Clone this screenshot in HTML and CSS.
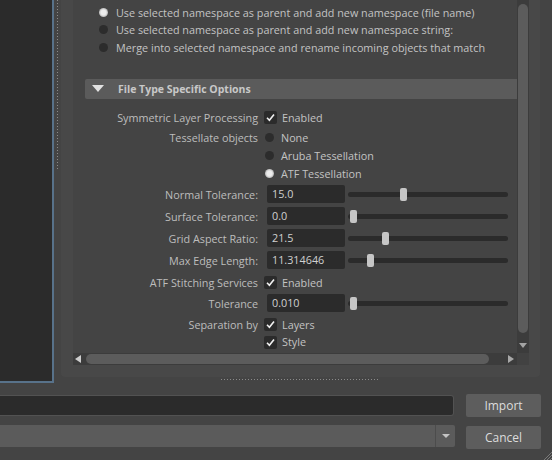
FILE: index.html
```html
<!DOCTYPE html>
<html>
<head>
<meta charset="utf-8">
<link rel="stylesheet" href="styles.css">
</head>
<body>
<div class="top">
  <div class="leftpane"></div>
  <div class="vsplit"><div class="vdots"></div></div>
  <div class="rightcol">
    <div class="frame">
      <div class="scrollarea">
        <div class="viewport">
          <div class="radios">
            <div class="rrow"><span class="radio on"></span><span class="rt">Use selected namespace as parent and add new namespace (file name)</span></div>
            <div class="rrow"><span class="radio"></span><span class="rt">Use selected namespace as parent and add new namespace string:</span></div>
            <div class="rrow"><span class="radio"></span><span class="rt">Merge into selected namespace and rename incoming objects that match</span></div>
          </div>
          <div class="section"><span class="tri"></span><span class="stitle">File Type Specific Options</span></div>
          <div class="form">
            <div class="row">
              <span class="lab">Symmetric Layer Processing</span>
              <span class="check"><svg viewBox="0 0 13 13" width="13" height="13"><polyline points="3,6.8 5.4,9.3 10,3.5" fill="none" stroke="#f0f0f0" stroke-width="1.6"/></svg></span>
              <span class="ctext">Enabled</span>
            </div>
            <div class="row sp2">
              <span class="lab">Tessellate objects</span>
              <span class="radio fr"></span><span class="rtext">None</span>
            </div>
            <div class="row">
              <span class="lab"></span>
              <span class="radio fr"></span><span class="rtext">Aruba Tessellation</span>
            </div>
            <div class="row">
              <span class="lab"></span>
              <span class="radio fr on"></span><span class="rtext">ATF Tessellation</span>
            </div>
            <div class="row frow sp2">
              <span class="lab">Normal Tolerance:</span>
              <span class="field">15.0</span>
              <span class="slider"><span class="thumb" style="left:52px"></span></span>
            </div>
            <div class="row frow sp2">
              <span class="lab">Surface Tolerance:</span>
              <span class="field">0.0</span>
              <span class="slider"><span class="thumb" style="left:2px"></span></span>
            </div>
            <div class="row frow sp2">
              <span class="lab">Grid Aspect Ratio:</span>
              <span class="field">21.5</span>
              <span class="slider"><span class="thumb" style="left:34px"></span></span>
            </div>
            <div class="row frow sp2">
              <span class="lab">Max Edge Length:</span>
              <span class="field">11.314646</span>
              <span class="slider"><span class="thumb" style="left:19px"></span></span>
            </div>
            <div class="row frow sp2">
              <span class="lab">ATF Stitching Services</span>
              <span class="check"><svg viewBox="0 0 13 13" width="13" height="13"><polyline points="3,6.8 5.4,9.3 10,3.5" fill="none" stroke="#f0f0f0" stroke-width="1.6"/></svg></span>
              <span class="ctext">Enabled</span>
            </div>
            <div class="row frow sp1">
              <span class="lab">Tolerance</span>
              <span class="field">0.010</span>
              <span class="slider"><span class="thumb" style="left:2px"></span></span>
            </div>
            <div class="row sp2">
              <span class="lab">Separation by</span>
              <span class="check"><svg viewBox="0 0 13 13" width="13" height="13"><polyline points="3,6.8 5.4,9.3 10,3.5" fill="none" stroke="#f0f0f0" stroke-width="1.6"/></svg></span>
              <span class="ctext">Layers</span>
            </div>
            <div class="row short">
              <span class="lab"></span>
              <span class="check"><svg viewBox="0 0 13 13" width="13" height="13"><polyline points="3,6.8 5.4,9.3 10,3.5" fill="none" stroke="#f0f0f0" stroke-width="1.6"/></svg></span>
              <span class="ctext">Style</span>
            </div>
          </div>
        </div>
        <div class="vscroll"><div class="vthumb"></div><div class="darr"></div></div>
        <div class="hscroll"><span class="larr"></span><div class="hthumb"></div><span class="rarr"></span></div>
        <div class="corner"></div>
      </div>
    </div>
    <div class="hsplit"><div class="hdots"></div></div>
  </div>
</div>
<div class="bottom">
  <div class="namefield"></div>
  <button class="btn">Import</button>
  <div class="combo"><div class="combo-arrow"><span class="carr"></span></div></div>
  <button class="btn cancel">Cancel</button>
</div>
<svg class="grip" width="13" height="9" viewBox="0 0 13 9"><path d="M13 1 L5 9 M13 4 L8 9 M13 7 L11 9" stroke="#7a7a7a" stroke-width="1"/></svg>
</body>
</html>
```

FILE: styles.css
```css
* { box-sizing: border-box; }
html, body { margin: 0; padding: 0; }
body {
  width: 552px;
  height: 460px;
  overflow: hidden;
  background: #444444;
  font-family: "Open Sans", sans-serif;
  font-size: 10.8px;
  color: #c3c3c3;
  position: relative;
}
.top { display: flex; height: 383px; }
.leftpane {
  width: 54px;
  height: 383px;
  background: #2b2b2b;
  border-right: 2px solid #58728a;
  border-bottom: 2px solid #58728a;
  flex: none;
}
.vsplit { width: 7px; flex: none; padding-left: 3px; }
.vdots {
  width: 1px;
  height: 169px;
  background: repeating-linear-gradient(to bottom, #8a8a8a 0 1px, transparent 1px 3px);
}
.rightcol { width: 479px; flex: none; display: flex; flex-direction: column; }
.frame {
  height: 377px;
  background: #484848;
  border-bottom-left-radius: 4px;
  border-bottom-right-radius: 4px;
  padding: 0 11px 12px 12px;
}
.scrollarea {
  display: grid;
  grid-template-columns: 444px 12px;
  grid-template-rows: 353px 12px;
  height: 365px;
}
.viewport { background: #444444; overflow: hidden; }
.radios { padding-top: 3.5px; }
.rrow { display: flex; align-items: center; height: 17.5px; padding-left: 26px; white-space: nowrap; }
.radio {
  width: 9px; height: 9px; border-radius: 50%;
  background: #2c2c2c; flex: none; margin-right: 8px;
}
.radio.on { background: radial-gradient(circle, #ececec 0 2.5px, #b8b8b8 4.5px); }
.section {
  margin: 23px 0 0 12px;
  height: 20px;
  background: #5b5b5b;
  border-radius: 2px 0 0 2px;
  display: flex;
  align-items: center;
  padding-left: 7px;
}
.tri {
  width: 0; height: 0;
  border-left: 6px solid transparent;
  border-right: 6px solid transparent;
  border-top: 7px solid #e2e2e2;
  margin-right: 14px;
  margin-top: -1px;
}
.stitle { font-weight: bold; font-size: 10.5px; color: #c8c8c8; }
.form { margin-top: 9px; }
.row { display: flex; align-items: center; height: 18px; white-space: nowrap; }
.row.frow { height: 20px; }
.row.short { height: 17px; }
.sp2 { margin-top: 2px; }
.sp1 { margin-top: 1px; }
.lab { width: 185px; flex: none; text-align: right; margin-right: 6px; color: #bdbdbd; }
.check {
  width: 13px; height: 13px; background: #2b2b2b; border-radius: 2px; flex: none;
  display: flex;
  margin-top: 1px;
}
.ctext { margin-left: 5px; }
.radio.fr { margin-left: 1px; margin-right: 7px; }
.field {
  margin-left: 3px;
  width: 78px; height: 18px;
  background: #2b2b2b;
  border-radius: 2px;
  padding-left: 5px;
  line-height: 18px;
  color: #d0d0d0;
  flex: none;
}
.slider {
  position: relative;
  margin-left: 3px;
  width: 160px; height: 5px;
  background: #2b2b2b;
  border-radius: 3px;
  flex: none;
}
.thumb {
  position: absolute;
  top: -4px;
  width: 7px; height: 13px;
  background: #c6c6c6;
  border-radius: 2px;
}
.vscroll { background: #3c3c3c; display: flex; flex-direction: column; align-items: center; padding-top: 4px; }
.vthumb { width: 10px; height: 329px; background: #5c5c5c; border-radius: 5px; }
.darr {
  margin-top: 10px;
  width: 0; height: 0;
  border-left: 4px solid transparent;
  border-right: 4px solid transparent;
  border-top: 5px solid #a4a4a4;
}
.hscroll { background: #3c3c3c; display: flex; align-items: center; padding-left: 2px; }
.larr {
  width: 0; height: 0;
  border-top: 4px solid transparent;
  border-bottom: 4px solid transparent;
  border-right: 6px solid #cdcdcd;
}
.hthumb { margin-left: 5px; width: 403px; height: 10px; background: #5c5c5c; border-radius: 5px; }
.rarr {
  margin-left: 19px;
  width: 0; height: 0;
  border-top: 4px solid transparent;
  border-bottom: 4px solid transparent;
  border-left: 6px solid #a8a8a8;
}
.corner { background: #424242; }
.hsplit { height: 6px; padding: 2px 0 0 160px; }
.hdots {
  width: 157px; height: 1px;
  background: repeating-linear-gradient(to right, #8a8a8a 0 1px, transparent 1px 3px);
}
.bottom {
  display: grid;
  grid-template-columns: 455px 75px;
  grid-template-rows: 23px 24px;
  column-gap: 11px;
  row-gap: 8px;
  padding-top: 11px;
}
.namefield {
  align-self: center;
  height: 21px;
  background: #2b2b2b;
  border: 1px solid #525252;
  border-left: none;
  border-radius: 0 3px 3px 0;
  margin-right: 1px;
}
.btn {
  font-family: "Open Sans", sans-serif;
  font-size: 12px;
  color: #dcdcdc;
  background: #5d5d5d;
  border: none;
  border-radius: 2px;
  height: 23px;
  padding: 0;
}
.btn.cancel { margin-top: 1px; }
.combo {
  height: 22px;
  background: #5b5b5b;
  border-radius: 0 2px 2px 0;
  display: flex;
  justify-content: flex-end;
}
.combo-arrow {
  width: 20px;
  border-left: 1px solid #4c4c4c;
  display: flex; align-items: center; justify-content: center;
}
.carr {
  width: 0; height: 0;
  border-left: 4px solid transparent;
  border-right: 4px solid transparent;
  border-top: 4px solid #c4c4c4;
}
.grip { position: absolute; right: 0; bottom: 0; }
```
